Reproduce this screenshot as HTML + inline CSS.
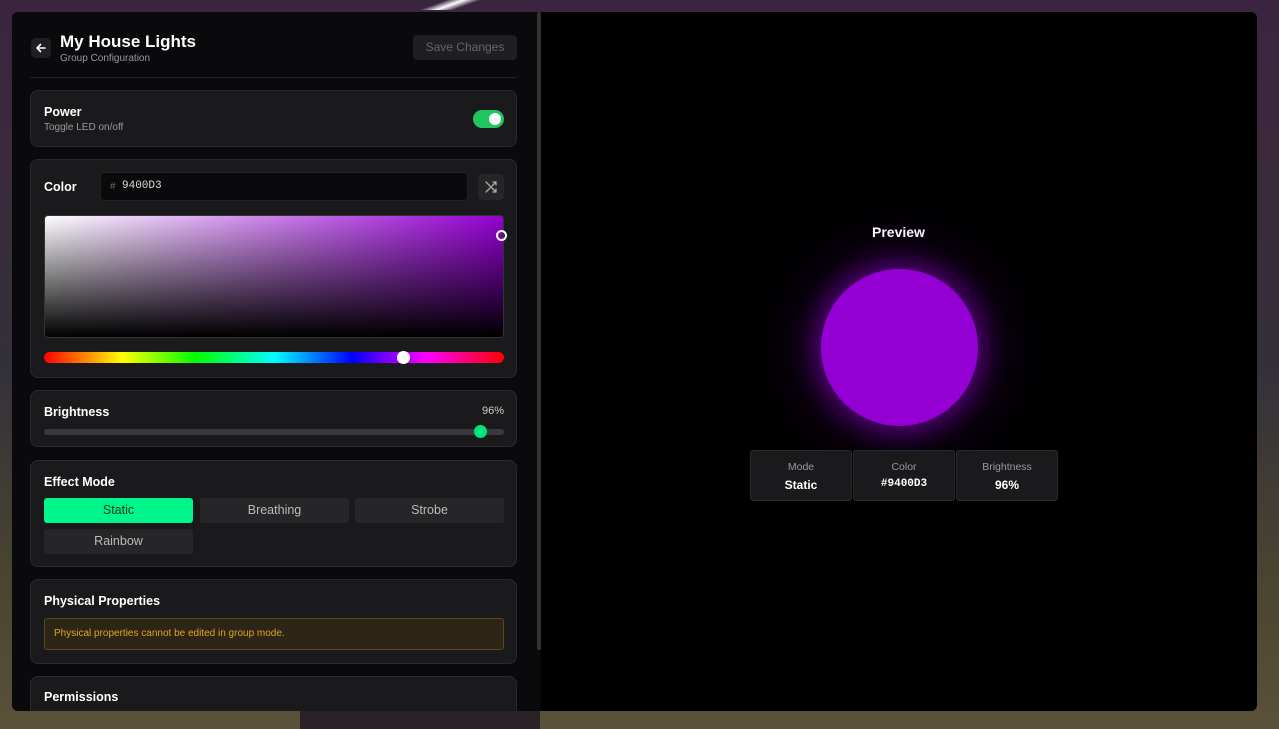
<!DOCTYPE html>
<html><head><meta charset="utf-8"><style>
*{box-sizing:border-box;margin:0;padding:0}
body{width:1279px;height:729px;overflow:hidden;font-family:"Liberation Sans",sans-serif;position:relative;
background:linear-gradient(180deg,#3a2440 0%,#3a2a3c 20%,#34303a 50%,#4a4530 80%,#5a5238 100%);}
.win{position:absolute;left:12px;top:12px;width:1245px;height:699px;background:#000;border-radius:6px;overflow:hidden}
.left{position:absolute;left:0;top:0;width:529px;height:699px;background:#0a0a0c}
.sb{position:absolute;left:525px;top:0;width:4px;height:638px;background:#333;border-radius:2px}
.card{position:absolute;left:18px;width:487px;background:#1a1a1c;border:1px solid #2a2a2d;border-radius:8px}
.t{color:#fff;font-weight:bold;font-size:12.5px;position:absolute}
.s{color:#9a9a9e;font-size:10px;position:absolute}
.btn{position:absolute;height:25px;width:149px;background:#262628;border-radius:3px;color:#bbb;font-size:12.5px;text-align:center;line-height:25px}
.ic{position:absolute;width:102px;height:51px;background:#1a1a1c;border:1px solid #2a2a2d;border-radius:3px;text-align:center;top:437px}
.ic .a{color:#9a9a9e;font-size:10.5px;margin-top:10px}
.ic .b{color:#fff;font-weight:bold;font-size:12px;margin-top:5px}
</style></head><body>
<div style="position:absolute;left:420px;top:0;width:60px;height:10px;background:linear-gradient(160deg,transparent 30%,#fff 50%,transparent 70%)"></div>
<div style="position:absolute;left:300px;top:711px;width:240px;height:18px;background:#2a2226"></div>
<div class="win">
<div class="left">
 <div style="position:absolute;left:19px;top:26px;width:20px;height:20px;background:#1f1f22;border-radius:5px">
  <svg width="20" height="20" viewBox="0 0 20 20"><path d="M14 10H6M9.5 6.5L6 10l3.5 3.5" stroke="#fff" stroke-width="1.6" fill="none" stroke-linecap="round" stroke-linejoin="round"/></svg></div>
 <div style="position:absolute;left:48px;top:20px;color:#fff;font-weight:bold;font-size:17px">My House Lights</div>
 <div class="s" style="left:48px;top:41px">Group Configuration</div>
 <div style="position:absolute;left:401px;top:23px;width:104px;height:25px;background:#1f1f22;border-radius:4px;color:#666;font-size:12px;text-align:center;line-height:25px">Save Changes</div>
 <div style="position:absolute;left:18px;top:65px;width:487px;height:1px;background:#222"></div>

 <div class="card" style="top:78px;height:57px">
  <div class="t" style="left:13px;top:14px">Power</div>
  <div class="s" style="left:13px;top:31px">Toggle LED on/off</div>
  <div style="position:absolute;left:442px;top:19px;width:31px;height:18px;background:#22c55e;border-radius:9px"><div style="position:absolute;right:3px;top:3px;width:12px;height:12px;border-radius:50%;background:#fff"></div></div>
 </div>

 <div class="card" style="top:147px;height:219px">
  <div class="t" style="left:13px;top:20px">Color</div>
  <div style="position:absolute;left:69px;top:12px;width:368px;height:29px;background:#0a0a0c;border-radius:4px;border:1px solid #222">
   <span style="position:absolute;left:9px;top:8px;color:#666;font-size:10px">#</span>
   <span style="position:absolute;left:21px;top:7px;color:#ddd;font-size:11px;font-family:'Liberation Mono',monospace">9400D3</span></div>
  <div style="position:absolute;left:447px;top:14px;width:26px;height:26px;background:#262628;border-radius:4px">
   <svg width="26" height="26" viewBox="0 0 26 26" fill="none" stroke="#aaa" stroke-width="1.3" stroke-linecap="round"><path d="M8 8l10 10M18 8l-4 4M12 14l-4 4M15 8h3v3M15 18h3v-3"/></svg></div>
  <div style="position:absolute;left:13px;top:55px;width:460px;height:123px;border-radius:4px;background:linear-gradient(to bottom,transparent,#000),linear-gradient(to right,#fff,#9400d3);border:1px solid #333"></div>
  <div style="position:absolute;left:465px;top:70px;width:11px;height:11px;border-radius:50%;border:2px solid #fff"></div>
  <div style="position:absolute;left:13px;top:192px;width:460px;height:11px;border-radius:6px;background:linear-gradient(to right,#f00,#ff0 17%,#0f0 33%,#0ff 50%,#00f 67%,#f0f 83%,#f00)"></div>
  <div style="position:absolute;left:366px;top:191px;width:13px;height:13px;border-radius:50%;background:#fff"></div>
 </div>

 <div class="card" style="top:378px;height:57px">
  <div class="t" style="left:13px;top:14px">Brightness</div>
  <div style="position:absolute;right:12px;top:14px;color:#ccc;font-size:11px">96%</div>
  <div style="position:absolute;left:13px;top:38px;width:460px;height:6px;border-radius:3px;background:#3a3a3e"></div>
  <div style="position:absolute;left:443px;top:34px;width:13px;height:13px;border-radius:50%;background:#00e676"></div>
 </div>

 <div class="card" style="top:448px;height:107px">
  <div class="t" style="left:13px;top:14px">Effect Mode</div>
  <div class="btn" style="left:13px;top:37px;background:#00f58a;color:#0a3a22">Static</div>
  <div class="btn" style="left:169px;top:37px">Breathing</div>
  <div class="btn" style="left:324px;top:37px">Strobe</div>
  <div class="btn" style="left:13px;top:68px">Rainbow</div>
 </div>

 <div class="card" style="top:567px;height:85px">
  <div class="t" style="left:13px;top:14px">Physical Properties</div>
  <div style="position:absolute;left:13px;top:38px;width:460px;height:32px;background:#2d2616;border:1px solid #5a4a18;border-radius:3px;color:#e0a520;font-size:10px;line-height:30px;padding-left:9px">Physical properties cannot be edited in group mode.</div>
 </div>

 <div class="card" style="top:664px;height:50px">
  <div class="t" style="left:13px;top:13px">Permissions</div>
 </div>
 <div class="sb"></div>
</div>

<div style="position:absolute;left:860px;top:212px;color:#fff;font-weight:bold;font-size:14px">Preview</div>
<div style="position:absolute;left:809px;top:257px;width:157px;height:157px;border-radius:50%;background:#9400d3;box-shadow:0 0 25px 6px rgba(148,0,211,.55),0 0 60px 20px rgba(148,0,211,.18)"></div>
<div class="ic" style="left:738px;top:438px"><div class="a">Mode</div><div class="b">Static</div></div>
<div class="ic" style="left:841px;top:438px"><div class="a">Color</div><div class="b" style="font-family:'Liberation Mono',monospace;font-size:11px">#9400D3</div></div>
<div class="ic" style="left:944px;top:438px"><div class="a">Brightness</div><div class="b">96%</div></div>
</div>
</body></html>
